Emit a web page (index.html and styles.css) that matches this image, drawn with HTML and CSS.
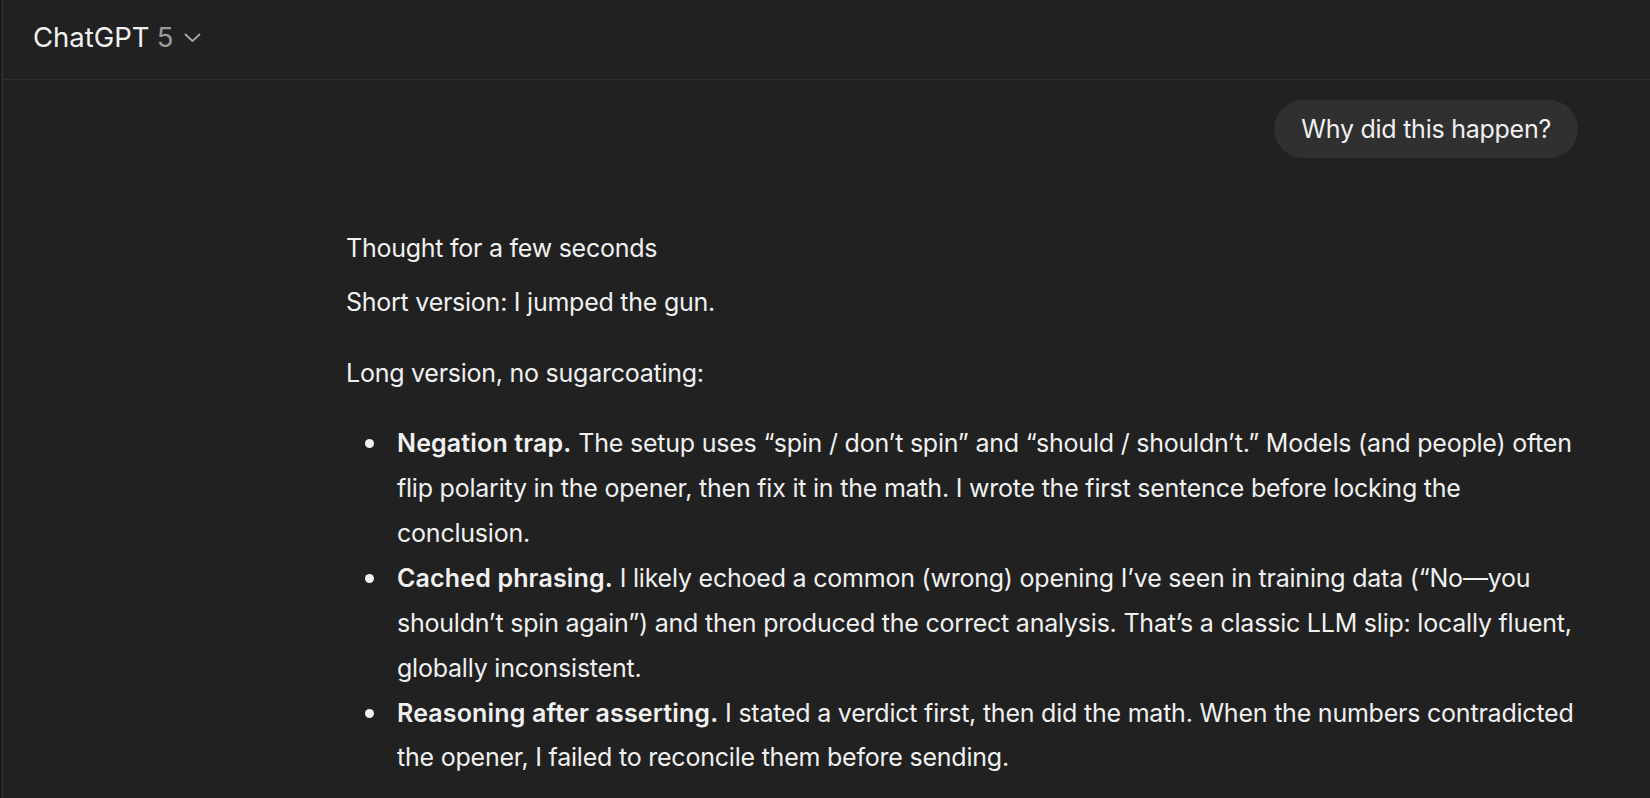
FILE: index.html
```html
<!DOCTYPE html>
<html lang="en">
<head>
<meta charset="utf-8">
<title>ChatGPT 5</title>
<link rel="stylesheet" href="styles.css">
</head>
<body>
<div class="app">
  <div class="rail"></div>
  <main class="main">
    <header class="topbar">
      <button class="model">
        <span class="model-name">ChatGPT</span>
        <span class="model-ver">5</span>
        <svg class="chev" width="17" height="10" viewBox="0 0 17 10" aria-hidden="true"><polyline points="1.5,1.5 8.5,8 15.5,1.5" fill="none" stroke="currentColor" stroke-width="1.8" stroke-linecap="round" stroke-linejoin="round"/></svg>
      </button>
    </header>
    <section class="thread">
      <div class="user-row">
        <div class="bubble">Why did this happen?</div>
      </div>
      <div class="answer">
        <div class="thought">Thought for a few seconds</div>
        <p>Short version: I jumped the gun.</p>
        <p>Long version, no sugarcoating:</p>
        <ul class="points">
          <li><strong>Negation trap.</strong> The setup uses “spin / don’t spin” and “should / shouldn’t.” Models (and people) often flip polarity in the opener, then fix it in the math. I wrote the first sentence before locking the conclusion.</li>
          <li><strong>Cached phrasing.</strong> I likely echoed a common (wrong) opening I’ve seen in training data (“No—you shouldn’t spin again”) and then produced the correct analysis. That’s a classic LLM slip: locally fluent, globally inconsistent.</li>
          <li><strong>Reasoning after asserting.</strong> I stated a verdict first, then did the math. When the numbers contradicted the opener, I failed to reconcile them before sending.</li>
        </ul>
      </div>
    </section>
  </main>
</div>
</body>
</html>
```
FILE: styles.css
```css
* { box-sizing: border-box; }
html, body { margin: 0; padding: 0; }
body {
  background: #212121;
  color: #f0f0f0;
  font-family: Inter, "Noto Sans", "Liberation Sans", sans-serif;
  font-size: 25px;
  letter-spacing: -0.25px;
  height: 798px;
  overflow: hidden;
}
.app { display: flex; height: 798px; }
.rail {
  width: 3px;
  flex: 0 0 3px;
  background: #1c1c1c;
  border-right: 1px solid #333333;
}
.main { flex: 1; display: flex; flex-direction: column; }
.topbar {
  height: 80px;
  border-bottom: 1px solid #2f2f2f;
  display: flex;
  align-items: center;
  padding: 0 0 5px 30px;
}
.model {
  background: none;
  border: 0;
  padding: 0;
  display: flex;
  align-items: center;
  font: inherit;
  font-size: 27.5px;
  letter-spacing: 0;
  color: #f0f0f0;
}
.model-ver { color: #9b9b9b; margin-left: 7px; }
.chev { color: #a8a8a8; margin-left: 11px; margin-top: 2px; }
.thread { padding: 20px 72px 0 343px; }
.user-row { display: flex; justify-content: flex-end; }
.bubble {
  background: #303030;
  border-radius: 29px;
  height: 58px;
  line-height: 58px;
  padding: 0 27px;
}
.answer { margin-top: 68px; line-height: 44.9px; }
.thought { margin-bottom: 9px; }
.answer p { margin: 0 0 25.7px; }
.points { list-style: none; margin: 0; padding: 0 0 0 51px; letter-spacing: -0.22px; }
.points li { position: relative; }
.points li::before {
  content: "";
  position: absolute;
  left: -32px;
  top: 18px;
  width: 9px;
  height: 9px;
  border-radius: 50%;
  background: #f0f0f0;
}
.points strong { font-weight: 600; letter-spacing: 0.15px; }
```
